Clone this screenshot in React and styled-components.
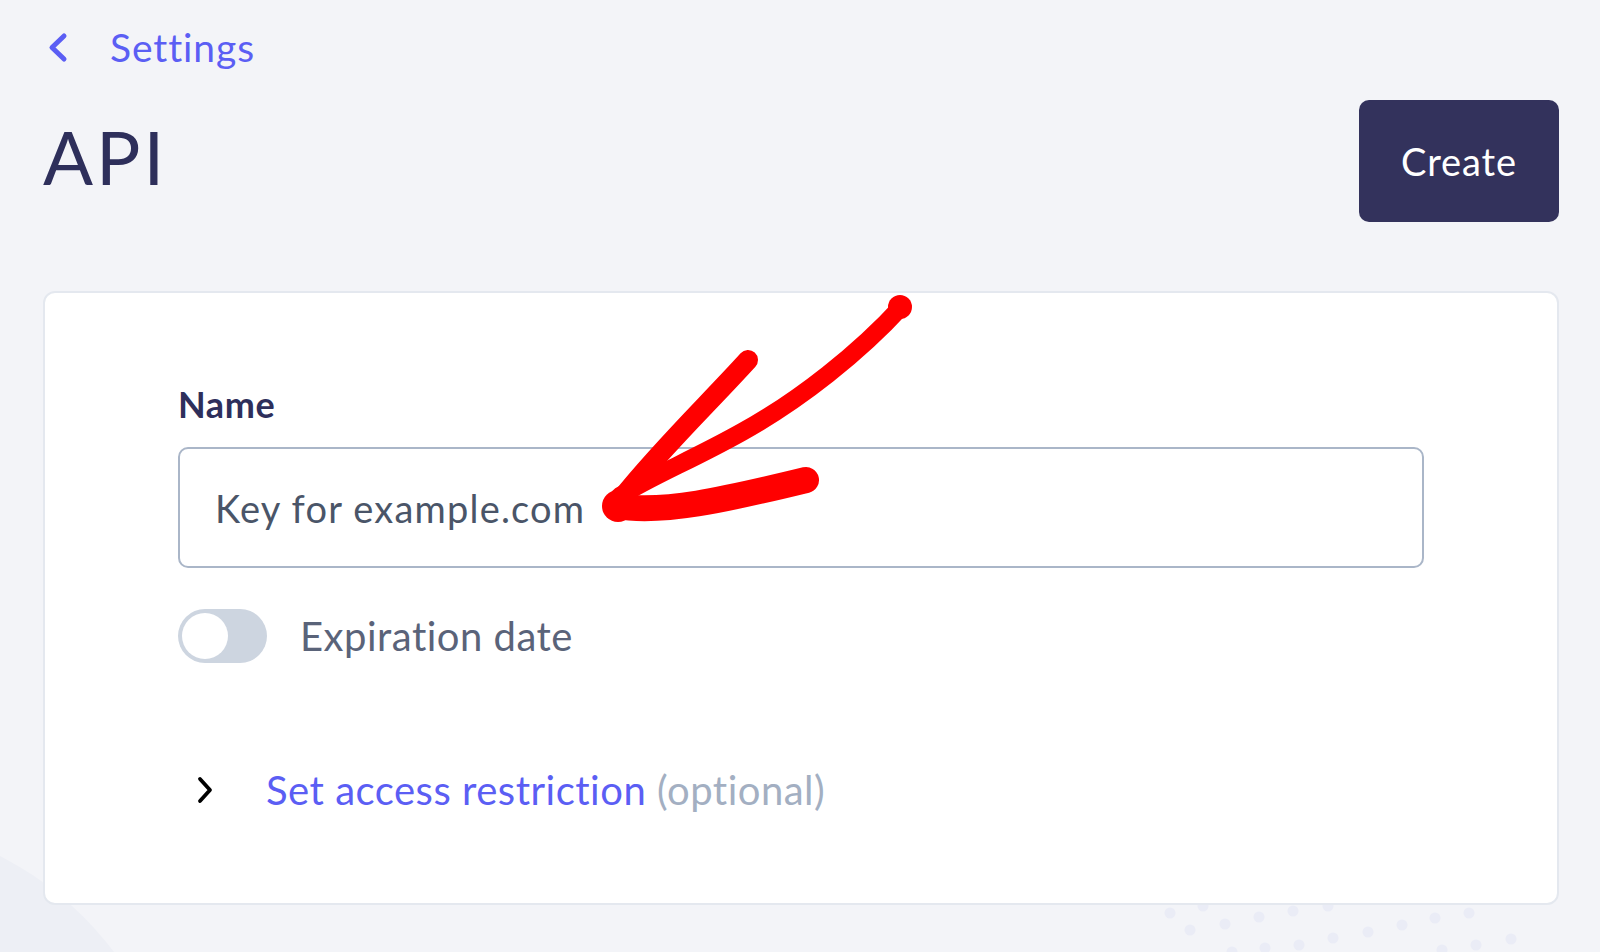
import React from "react";
import styled, { createGlobalStyle } from "styled-components";

const Global = createGlobalStyle`
  html, body { margin: 0; padding: 0; background: #f3f4f8; }
  body { font-family: Lato, "Noto Sans", sans-serif; }
  * { box-sizing: border-box; }
`;

const Page = styled.div`
  position: relative;
  width: 1600px;
  height: 952px;
  overflow: hidden;
  background: #f3f4f8;
  padding: 24px 41px 0 43px;
  font-family: Lato, "Noto Sans", sans-serif;
`;

const Decor = styled.svg`
  position: absolute;
  left: 0;
  top: 0;
  width: 1600px;
  height: 952px;
  pointer-events: none;
  z-index: ${(p) => p.$z};
`;

const Content = styled.div`
  position: relative;
  z-index: 1;
`;

const BackLink = styled.a`
  display: flex;
  align-items: center;
  gap: 42px;
  padding-left: 5px;
  color: #5b5ef4;
  text-decoration: none;
  font-size: 39px;
  line-height: 47px;
  letter-spacing: 0.9px;
`;

const HeaderRow = styled.div`
  display: flex;
  justify-content: space-between;
  align-items: flex-start;
  margin-top: 29px;
`;

const Title = styled.h1`
  margin: 12px 0 0 0;
  font-size: 74px;
  font-weight: 400;
  line-height: 89px;
  color: #2e2f5b;
  letter-spacing: 3px;
`;

const PrimaryButton = styled.button`
  width: 200px;
  height: 122px;
  border: none;
  border-radius: 10px;
  background: #33325c;
  color: #ffffff;
  font-family: inherit;
  font-size: 38px;
  letter-spacing: 0.9px;
  display: flex;
  align-items: center;
  justify-content: center;
`;

const Card = styled.section`
  margin-top: 69px;
  height: 614px;
  background: #ffffff;
  border: 2px solid #e4e8ef;
  border-radius: 12px;
  padding: 90px 133px 0 133px;
`;

const Label = styled.label`
  display: block;
  font-size: 36px;
  font-weight: 700;
  line-height: 43px;
  color: #2e2f5b;
  letter-spacing: 0.6px;
`;

const TextInput = styled.div`
  margin-top: 21px;
  height: 121px;
  border: 2px solid #aab6c8;
  border-radius: 10px;
  padding: 0 35px;
  display: flex;
  align-items: center;
  font-size: 38px;
  color: #4a5568;
  letter-spacing: 1.2px;
`;

const ToggleRow = styled.div`
  display: flex;
  align-items: center;
  gap: 33px;
  margin-top: 41px;
`;

const Track = styled.div`
  width: 89px;
  height: 54px;
  border-radius: 27px;
  background: #cdd5e0;
  padding: 4px;
  display: flex;
  justify-content: ${(p) => (p.$on ? "flex-end" : "flex-start")};
`;

const Knob = styled.div`
  width: 46px;
  height: 46px;
  border-radius: 50%;
  background: #ffffff;
`;

const ToggleLabel = styled.span`
  font-size: 40px;
  color: #5a6379;
  letter-spacing: 0.5px;
  line-height: 48px;
`;

const AccessRow = styled.div`
  display: flex;
  align-items: center;
  gap: 52px;
  margin-top: 103px;
  padding-left: 18px;
`;

const AccessText = styled.span`
  font-size: 40px;
  line-height: 48px;
  color: #5b5ef4;
  letter-spacing: 0.5px;
`;

const Optional = styled.span`
  color: #a3afc2;
`;

const dots = [
  [1190, 930], [1225, 924], [1259, 917], [1293, 911], [1328, 906],
  [1232, 952], [1265, 948], [1299, 945], [1333, 938], [1368, 932],
  [1402, 925], [1435, 918], [1469, 913], [1442, 950], [1476, 945], [1511, 939],
  [1170, 913], [1203, 906]
];

export default function App() {
  return (
    <>
      <Global />
      <Page>
        <Decor $z={0} viewBox="0 0 1600 952">
          <circle cx="-150" cy="1150" r="330" fill="#edeff5" />
          {dots.map(([x, y], i) => (
            <circle key={i} cx={x} cy={y} r="5.5" fill="#eaecf6" />
          ))}
        </Decor>
        <Content>
          <BackLink href="#">
            <svg width="20" height="31" viewBox="0 0 20 31">
              <polyline
                points="16,4 4,15.5 16,27"
                fill="none"
                stroke="#5b5ef4"
                strokeWidth="5"
                strokeLinecap="round"
                strokeLinejoin="round"
              />
            </svg>
            Settings
          </BackLink>
          <HeaderRow>
            <Title>API</Title>
            <PrimaryButton>Create</PrimaryButton>
          </HeaderRow>
          <Card>
            <Label>Name</Label>
            <TextInput>Key for example.com</TextInput>
            <ToggleRow>
              <Track $on={false}>
                <Knob />
              </Track>
              <ToggleLabel>Expiration date</ToggleLabel>
            </ToggleRow>
            <AccessRow>
              <svg width="18" height="30" viewBox="0 0 18 30">
                <polyline
                  points="4,4 14,15 4,26"
                  fill="none"
                  stroke="#000000"
                  strokeWidth="3.8"
                  strokeLinecap="round"
                  strokeLinejoin="round"
                />
              </svg>
              <AccessText>
                Set access restriction <Optional>(optional)</Optional>
              </AccessText>
            </AccessRow>
          </Card>
        </Content>
        <Decor $z={2} viewBox="0 0 1600 952">
          <g fill="none" stroke="#ff0000" strokeLinecap="round" strokeLinejoin="round">
            <path d="M 902 306 C 860 352, 800 400, 742 432 C 692 460, 652 476, 620 496" strokeWidth="18" />
            <path d="M 748 360 C 708 404, 660 450, 622 498" strokeWidth="20" />
            <path d="M 616 506 C 662 514, 724 500, 806 480" strokeWidth="26" />
          </g>
          <circle cx="618" cy="506" r="16" fill="#ff0000" />
          <circle cx="900" cy="307" r="12" fill="#ff0000" />
        </Decor>
      </Page>
    </>
  );
}
